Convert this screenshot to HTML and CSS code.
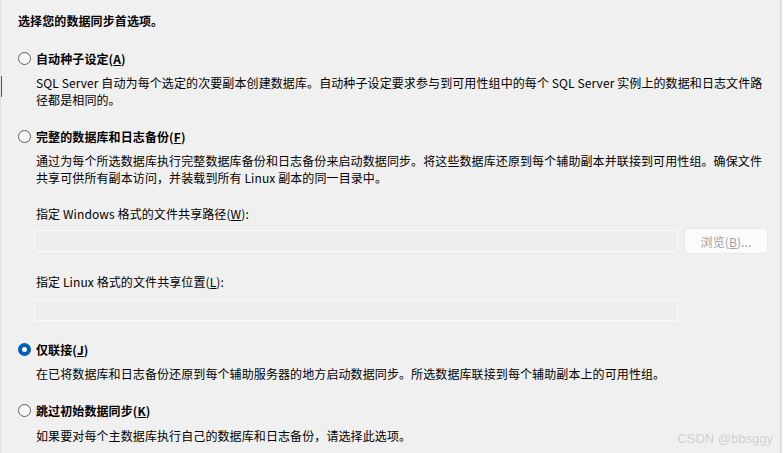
FILE: index.html
```html
<!DOCTYPE html>
<html lang="zh-CN">
<head>
  <meta charset="UTF-8">
  <title>数据同步</title>
  <link rel="stylesheet" href="styles.css">
</head>
<body>
  <div class="page">
    <span class="nav-mark"></span>

    <h1 class="title">选择您的数据同步首选项。</h1>

    <!-- 自动种子设定 -->
    <div class="option">
      <label class="option-label">
        <input type="radio" name="sync" class="radio">
        <span>自动种子设定(<u>A</u>)</span>
      </label>
      <p class="option-desc">SQL Server 自动为每个选定的次要副本创建数据库。自动种子设定要求参与到可用性组中的每个 SQL Server 实例上的数据和日志文件路<br>径都是相同的。</p>
    </div>

    <!-- 完整的数据库和日志备份 -->
    <div class="option">
      <label class="option-label">
        <input type="radio" name="sync" class="radio">
        <span>完整的数据库和日志备份(<u>F</u>)</span>
      </label>
      <p class="option-desc">通过为每个所选数据库执行完整数据库备份和日志备份来启动数据同步。将这些数据库还原到每个辅助副本并联接到可用性组。确保文件<br>共享可供所有副本访问，并装载到所有 Linux 副本的同一目录中。</p>

      <div class="field">
        <div class="field-label">指定 Windows 格式的文件共享路径(<u>W</u>):</div>
        <div class="field-row">
          <input type="text" class="path-input" disabled>
          <button class="browse-btn" disabled>浏览(<u>B</u>)...</button>
        </div>
      </div>

      <div class="field">
        <div class="field-label">指定 Linux 格式的文件共享位置(<u>L</u>):</div>
        <div class="field-row field-row-tight">
          <input type="text" class="path-input" disabled>
        </div>
      </div>
    </div>

    <!-- 仅联接 -->
    <div class="option">
      <label class="option-label">
        <input type="radio" name="sync" class="radio" checked>
        <span>仅联接(<u>J</u>)</span>
      </label>
      <p class="option-desc">在已将数据库和日志备份还原到每个辅助服务器的地方启动数据同步。所选数据库联接到每个辅助副本上的可用性组。</p>
    </div>

    <!-- 跳过初始数据同步 -->
    <div class="option">
      <label class="option-label">
        <input type="radio" name="sync" class="radio">
        <span>跳过初始数据同步(<u>K</u>)</span>
      </label>
      <p class="option-desc option-desc-last">如果要对每个主数据库执行自己的数据库和日志备份，请选择此选项。</p>
    </div>

    <span class="watermark">CSDN @bbsggy</span>
  </div>
</body>
</html>
```

FILE: styles.css
```css
body {
  margin: 0;
  padding: 0;
  background-color: #f0f0f0;
  color: #000;
  font-family: "Noto Sans CJK SC", "Noto Sans", sans-serif;
  font-size: 12px;
  line-height: 17px;
  letter-spacing: 0.1px;
}

.page {
  position: relative;
  width: 781px;
  height: 453px;
  box-sizing: border-box;
  padding: 12px 0 0 17px;
  border-left: 1px solid #e2e2e2;
  border-right: 1px solid #d4d4d4;
  overflow: hidden;
}

/* blue marker on the left edge */
.nav-mark {
  position: absolute;
  left: -1px;
  top: 76px;
  width: 2px;
  height: 21px;
  background-color: #0067c0;
}

.title {
  margin: 0;
  font-size: 12px;
  font-weight: bold;
}

.option {
  margin-top: 20px;
}

.option:first-of-type {
  margin-top: 21px;
}

.option-label {
  display: flex;
  align-items: center;
  font-weight: bold;
}

.radio {
  appearance: none;
  -webkit-appearance: none;
  width: 13px;
  height: 13px;
  margin: 0 5px 0 0;
  border: 1px solid #5f5f5f;
  border-radius: 50%;
  background-color: #f7f7f7;
  box-sizing: border-box;
}

.radio:checked {
  border: 4px solid #005fb8;
  background-color: #fff;
}

.option-desc {
  margin: 7px 0 0 18px;
}

.option-desc-last {
  margin-top: 8px;
}

.field {
  margin: 19px 0 0 16px;
}

.field-label {
  margin-left: 2px;
}

.field-row {
  display: flex;
  align-items: center;
  margin-top: 6px;
}

.field-row-tight {
  margin-top: 9px;
}

.path-input {
  width: 644px;
  height: 22px;
  box-sizing: border-box;
  border: 1px solid #fbfbfb;
  border-radius: 2px;
  background-color: #efefef;
  margin: 0;
}

.browse-btn {
  width: 84px;
  height: 26px;
  margin-left: 6px;
  box-sizing: border-box;
  border: 1px solid #e9e9e9;
  border-radius: 4px;
  background-color: #fbfbfb;
  color: #a2a2a2;
  font-family: inherit;
  font-size: 12px;
  letter-spacing: 0.1px;
  padding: 0;
}

.watermark {
  position: absolute;
  right: 7px;
  bottom: 6px;
  font-family: "Liberation Sans", Arial, sans-serif;
  font-size: 13px;
  letter-spacing: 0;
  color: #cdcdcd;
  text-shadow: 0 0 1px #ffffff;
}
```
